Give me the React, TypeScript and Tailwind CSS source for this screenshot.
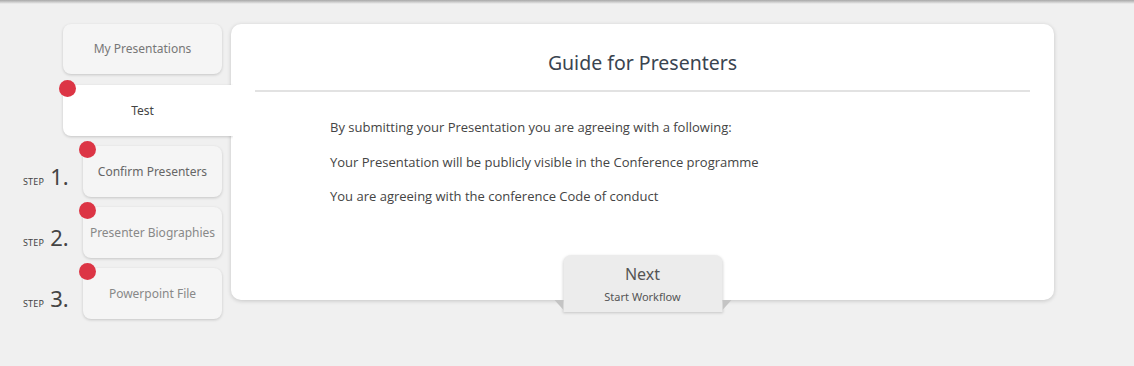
import React from "react";

const ubuntu = { fontFamily: '"Noto Sans", "Open Sans", sans-serif' };

function Dot() {
  return <span className="absolute -left-[4px] -top-[5px] h-[17px] w-[17px] rounded-full bg-[#dc3545]" />;
}

function StepRow({ n, label, muted }: { n: number; label: string; muted?: boolean }) {
  return (
    <div className="flex h-[51px] items-end">
      <div className="flex w-[83px] items-baseline pb-[9px] pl-[23px] text-[#444]">
        <span className="text-[9px] tracking-[0.02em]">STEP</span>
        <span className="ml-[6px] text-[22px] leading-none">{n}.</span>
      </div>
      <div
        className={`relative flex h-[51px] w-[139px] items-center justify-center rounded-[8px] bg-[#f5f5f5] text-[12px] shadow-[0_1px_3px_rgba(0,0,0,0.18)] ${
          muted ? "text-[#888]" : "text-[#666]"
        }`}
      >
        <Dot />
        {label}
      </div>
    </div>
  );
}

export default function App() {
  return (
    <div className="h-[366px] w-full overflow-hidden bg-[#f0f0f0]" style={ubuntu}>
      <div className="h-[4px] bg-gradient-to-b from-[#a8a8a8] to-[#f0f0f0]" />
      <div className="flex pt-[20px]">
        <div className="flex w-[231px] flex-col">
          <div className="ml-[63px] flex h-[50px] w-[159px] items-center justify-center rounded-[8px] bg-[#f5f5f5] text-[12px] text-[#777] shadow-[0_1px_3px_rgba(0,0,0,0.18)]">
            My Presentations
          </div>
          <div className="relative z-10 ml-[63px] mt-[11px] flex h-[51px] w-[170px] items-center rounded-l-[8px] bg-white text-[12px] text-[#444] shadow-[0_1px_3px_rgba(0,0,0,0.18)] [clip-path:inset(-10px_0_-10px_-10px)]">
            <Dot />
            <span className="w-[159px] text-center">Test</span>
          </div>
          <div className="mt-[10px] flex flex-col gap-[10px]">
            <StepRow n={1} label="Confirm Presenters" />
            <StepRow n={2} label="Presenter Biographies" muted />
            <StepRow n={3} label="Powerpoint File" muted />
          </div>
        </div>
        <div className="relative h-[276px] w-[823px] rounded-[10px] bg-white shadow-[0_1px_4px_rgba(0,0,0,0.18)]">
          <div className="pt-[25px] text-center text-[19.5px] leading-[28px] text-[#3a4450]">Guide for Presenters</div>
          <div className="mx-[24px] mt-[13px] h-[2px] bg-[#e2e2e2]" />
          <div className="pl-[99px] pt-[24px] text-[13px] leading-[22px] text-[#444]" style={{ fontFamily: '"Open Sans", sans-serif' }}>
            <p>By submitting your Presentation you are agreeing with a following:</p>
            <p className="mt-[12.5px]">Your Presentation will be publicly visible in the Conference programme</p>
            <p className="mt-[12.5px]">You are agreeing with the conference Code of conduct</p>
          </div>
          <div className="absolute -bottom-[12px] left-1/2 h-[57px] w-[159px] -translate-x-1/2">
            <svg className="absolute -left-[9px] bottom-[2px]" width="9" height="10" viewBox="0 0 9 10">
              <polygon points="0,0 9,0 9,10" fill="#c4c4c4" />
            </svg>
            <svg className="absolute -right-[9px] bottom-[2px]" width="9" height="10" viewBox="0 0 9 10">
              <polygon points="0,0 9,0 0,10" fill="#c4c4c4" />
            </svg>
            <div className="flex h-full w-full flex-col items-center rounded-t-[8px] bg-[#ececec] pt-[8px] text-[#555] shadow-[0_1px_3px_rgba(0,0,0,0.18)]">
              <span className="text-[16px] leading-[22px]">Next</span>
              <span className="mt-[4px] text-[11px] leading-[16px]">Start Workflow</span>
            </div>
          </div>
        </div>
      </div>
    </div>
  );
}
